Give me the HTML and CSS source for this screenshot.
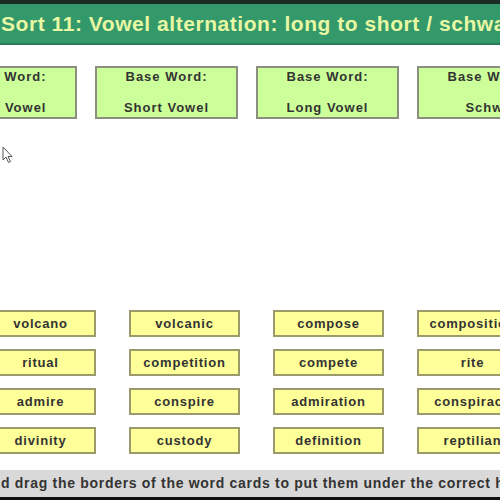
FILE: index.html
```html
<!DOCTYPE html>
<html>
<head>
<meta charset="utf-8">
<link rel="stylesheet" href="styles.css">
</head>
<body>
<div class="topstrip"></div>
<div class="titlebar">Sort 11: Vowel alternation: long to short / schwa</div>
<div class="headers">
  <div class="hcard"><div class="l1">Base Word:</div><div class="l2">Long Vowel</div></div>
  <div class="hcard"><div class="l1">Base Word:</div><div class="l2">Short Vowel</div></div>
  <div class="hcard"><div class="l1">Base Word:</div><div class="l2">Long Vowel</div></div>
  <div class="hcard"><div class="l1">Base Word:</div><div class="l2">Schwa</div></div>
</div>
<svg class="cursor" width="12" height="18" viewBox="0 0 12 18"><path d="M1 1 L1 14 L4 11 L6.5 16.5 L8.5 15.5 L6 10.5 L10 10.5 Z" fill="#fff" stroke="#555" stroke-width="1"/></svg>
<div class="words">
  <div class="wcard">volcano</div><div class="wcard">volcanic</div><div class="wcard">compose</div><div class="wcard">composition</div>
  <div class="wcard">ritual</div><div class="wcard">competition</div><div class="wcard">compete</div><div class="wcard">rite</div>
  <div class="wcard">admire</div><div class="wcard">conspire</div><div class="wcard">admiration</div><div class="wcard">conspiracy</div>
  <div class="wcard">divinity</div><div class="wcard">custody</div><div class="wcard">definition</div><div class="wcard">reptilian</div>
</div>
<div class="instr">d drag the borders of the word cards to put them under the correct headings.</div>
<div class="bottomstrip"></div>
</body>
</html>
```
FILE: styles.css
```css
html, body {
  margin: 0;
  padding: 0;
}
body {
  width: 500px;
  height: 500px;
  overflow: hidden;
  display: flex;
  flex-direction: column;
  background: #ffffff;
  font-family: "Liberation Sans", Arial, sans-serif;
  position: relative;
}
.topstrip {
  height: 4px;
  background: #1c2b24;
  flex: none;
}
.titlebar {
  flex: none;
  height: 39px;
  line-height: 39px;
  background: #33996a;
  border-bottom: 2px solid #2a7d57;
  color: #e8f7a4;
  font-weight: bold;
  font-size: 21px;
  letter-spacing: 0.55px;
  white-space: nowrap;
  padding-left: 1px;
  overflow: hidden;
}
.headers {
  flex: none;
  display: flex;
  gap: 18px;
  margin: 21px 0 0 -66px;
}
.hcard {
  flex: none;
  box-sizing: border-box;
  width: 143px;
  height: 53px;
  background: #ccff99;
  border: 2px solid #8c8f80;
  text-align: center;
  font-weight: bold;
  font-size: 13px;
  letter-spacing: 1px;
  color: #333333;
  white-space: nowrap;
}
.hcard .l1 {
  line-height: 14px;
  margin-top: 2px;
}
.hcard .l2 {
  line-height: 14px;
  margin-top: 17px;
}
.cursor {
  position: absolute;
  left: 2px;
  top: 146px;
}
.words {
  flex: none;
  display: grid;
  grid-template-columns: repeat(4, 111px);
  column-gap: 33px;
  row-gap: 12px;
  margin: 191px 0 0 -15px;
}
.wcard {
  box-sizing: border-box;
  height: 27px;
  line-height: 23px;
  background: #ffff99;
  border: 2px solid #9a9a6a;
  text-align: center;
  font-weight: bold;
  font-size: 13px;
  letter-spacing: 0.8px;
  color: #333333;
  white-space: nowrap;
  overflow: hidden;
}
.instr {
  flex: none;
  margin-top: auto;
  height: 27px;
  line-height: 27px;
  background: #d9d9d9;
  color: #333333;
  font-weight: bold;
  font-size: 14px;
  letter-spacing: 0.7px;
  white-space: nowrap;
  overflow: hidden;
  padding-left: 1px;
}
.bottomstrip {
  flex: none;
  height: 3px;
  background: #111111;
}
```
